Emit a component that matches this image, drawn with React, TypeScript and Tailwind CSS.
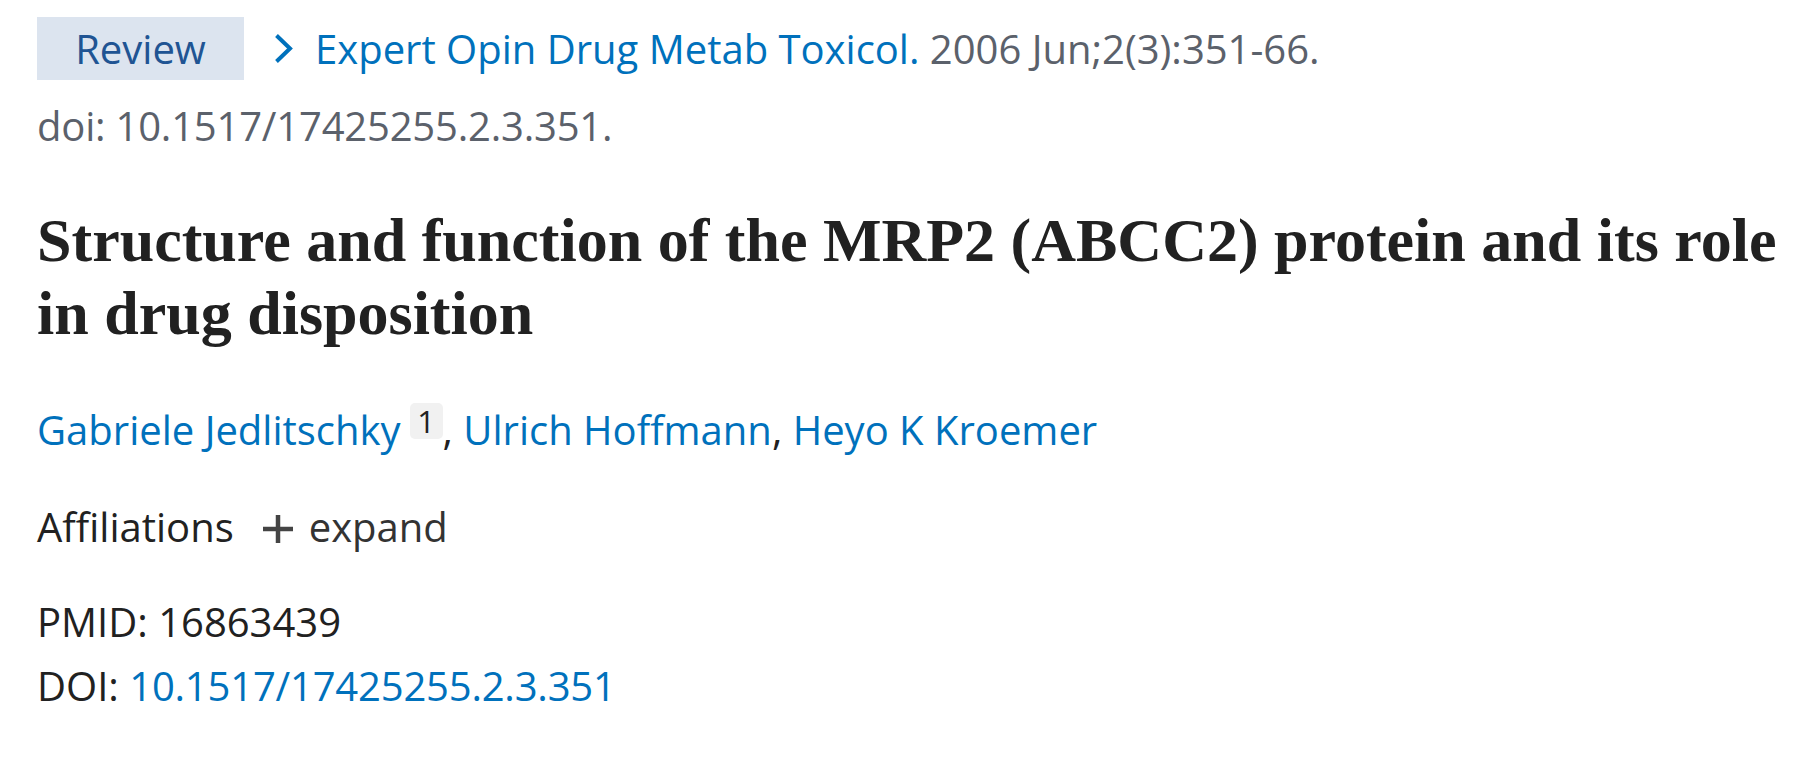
import React from "react";

export default function App() {
  return (
    <div className="min-h-[769px] w-[1819px] bg-white pl-[37px] pt-[17px] text-[40px] text-[#212121] font-['Open_Sans','Noto_Sans',sans-serif]">
      {/* Row 1: tag + journal */}
      <div className="flex h-[63px] items-center">
        <span className="flex h-[63px] w-[207px] items-center justify-center bg-[#dce4ef] leading-[56px] text-[#205493]">
          Review
        </span>
        <svg
          className="ml-[30px] mr-[22px] h-[31px] w-[19px] shrink-0"
          viewBox="0 0 19 31"
          fill="none"
          stroke="#0071bc"
          strokeWidth="4"
        >
          <polyline points="2.5,2.5 16,15.5 2.5,28.5" />
        </svg>
        <span className="whitespace-nowrap leading-[56px]">
          <a className="text-[#0071bc]">Expert Opin Drug Metab Toxicol.</a>
          <span className="text-[#5b616b]"> 2006 Jun;2(3):351-66.</span>
        </span>
      </div>

      {/* doi line */}
      <div className="mt-[18px] tracking-[-0.2px] leading-[56px] text-[#5b616b]">
        doi: 10.1517/17425255.2.3.351.
      </div>

      {/* Title */}
      <h1 className="mt-[50px] w-[1770px] text-[62px] font-bold leading-[73px] text-[#212121] font-['Liberation_Serif',serif]">
        Structure and function of the MRP2 (ABCC2) protein and its role in drug
        disposition
      </h1>

      {/* Authors */}
      <div className="mt-[52px] flex items-center whitespace-nowrap leading-[56px]">
        <a className="text-[#0071bc]">Gabriele Jedlitschky</a>
        <span className="ml-[9px] flex h-[36px] w-[33px] -translate-y-[9px] items-center justify-center rounded-[5px] bg-[#f1f1f1] text-[31px] leading-none text-[#212121]">
          1
        </span>
        <span className="text-[#212121]">,&nbsp;</span>
        <a className="text-[#0071bc]">Ulrich Hoffmann</a>
        <span className="text-[#212121]">,&nbsp;</span>
        <a className="text-[#0071bc]">Heyo K Kroemer</a>
      </div>

      {/* Affiliations */}
      <div className="mt-[41px] flex items-center leading-[56px]">
        <span>Affiliations</span>
        <svg
          className="ml-[29px] mr-[16px] h-[28px] w-[30px] shrink-0 translate-y-[2px]"
          viewBox="0 0 30 28"
          fill="none"
          stroke="#444444"
          strokeWidth="4.5"
        >
          <line x1="15" y1="0" x2="15" y2="28" />
          <line x1="0" y1="14" x2="30" y2="14" />
        </svg>
        <span className="text-[#333333]">expand</span>
      </div>

      {/* Identifiers */}
      <div className="mt-[35px] leading-[64px]">
        <div>PMID: 16863439</div>
        <div>
          DOI: <a className="tracking-[-0.2px] text-[#0071bc]">10.1517/17425255.2.3.351</a>
        </div>
      </div>
    </div>
  );
}
